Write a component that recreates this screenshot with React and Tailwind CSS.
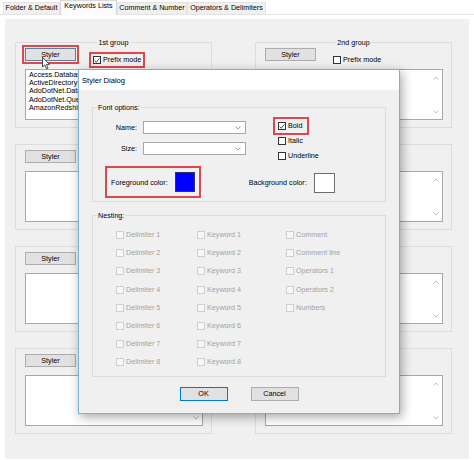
import { Fragment } from "react"

const FONT = { fontFamily: '"Liberation Sans", Arial, sans-serif' }

// only the two top labels show, the rest sit under the dialog
const GROUPS = ["1st group", "2nd group", "", "", "", "", "", ""]

const KEYWORDS = ["Access.Databas", "ActiveDirectory", "AdoDotNet.Data", "AdoDotNet.Que", "AmazonRedshif"]

const NESTING = [
  ["Delimiter 1", "Delimiter 2", "Delimiter 3", "Delimiter 4", "Delimiter 5", "Delimiter 6", "Delimiter 7", "Delimiter 8"],
  ["Keyword 1", "Keyword 2", "Keyword 3", "Keyword 4", "Keyword 5", "Keyword 6", "Keyword 7", "Keyword 8"],
  ["Comment", "Comment line", "Operators 1", "Operators 2", "Numbers"],
]

function Check({ checked, disabled, label, className = "" }) {
  return (
    <div className={`flex w-fit items-center gap-[2px] ${className}`}>
      <span
        className={`flex h-[8px] w-[8px] shrink-0 items-center justify-center border ${
          disabled ? "border-[#cfcfcf] bg-[#f7f7f7]" : "border-[#333333] bg-white"
        }`}
      >
        {checked ? (
          <svg width="7" height="7" viewBox="0 0 7 7">
            <polyline points="0.8,3.6 2.6,5.6 6.3,1" fill="none" stroke="#222" strokeWidth="0.9" />
          </svg>
        ) : null}
      </span>
      <span className={`leading-[8px] whitespace-nowrap ${disabled ? "text-[#a3a3a3]" : "text-black"}`}>{label}</span>
    </div>
  )
}

function Arrow({ up }) {
  return (
    <svg width="6" height="4" viewBox="0 0 6 4">
      <polyline
        points={up ? "0.5,3.5 3,1 5.5,3.5" : "0.5,0.5 3,3 5.5,0.5"}
        fill="none"
        stroke="#b5b5b5"
        strokeWidth="0.8"
      />
    </svg>
  )
}

function Group({ label, index }) {
  const first = index === 0
  // lower rows: the dialog hides the right styler buttons and the left prefix checkboxes
  const covered = index >= 2
  const right = index % 2 === 1
  return (
    <div className="relative flex h-[86px] flex-col border border-[#dcdcdc] pl-[9px] pt-[5px]">
      {label ? (
        <span className="absolute left-1/2 top-[-5px] -translate-x-1/2 bg-[#f0f0f0] px-[2px] leading-[9px] whitespace-nowrap">
          {label}
        </span>
      ) : null}
      <div className="flex h-[20px] items-start">
        {covered && right ? (
          <div className="h-[13px] w-[51px]" />
        ) : (
          <button
            className={`h-[13px] w-[51px] border bg-[#e1e1e1] leading-[11px] ${
              first
                ? "border-[#5f7f9f] outline-2 outline-offset-[1px] outline-[#e0474c]"
                : "border-[#adadad]"
            }`}
          >
            Styler
          </button>
        )}
        {covered ? null : (
          <div
            className={`ml-[17px] mt-[8px] ${
              first ? "outline-2 outline-offset-[2px] outline-[#e0474c]" : ""
            }`}
          >
            <Check checked={first} label="Prefix mode" />
          </div>
        )}
      </div>
      <div className="relative mt-[1px] h-[51px] w-[178px] overflow-hidden border border-[#a8a8a8] bg-white pl-[3px] pt-[1px]">
        {first
          ? KEYWORDS.map((k) => (
              <div key={k} className="h-[8.2px] leading-[8.2px] whitespace-nowrap">
                {k}
              </div>
            ))
          : null}
        <div className="absolute right-[3px] top-[6px]">
          <Arrow up />
        </div>
        <div className="absolute bottom-[5px] right-[3px]">
          <Arrow />
        </div>
      </div>
    </div>
  )
}

function Combo() {
  return (
    <div className="flex h-[13px] w-[103px] items-center justify-end border border-[#a8a8a8] bg-white pr-[4px]">
      <svg width="6" height="4" viewBox="0 0 6 4">
        <polyline points="0.5,0.5 3,3 5.5,0.5" fill="none" stroke="#8a8a8a" strokeWidth="0.8" />
      </svg>
    </div>
  )
}

function Cursor() {
  return (
    <svg className="absolute left-[42px] top-[57px]" width="9" height="13" viewBox="0 0 9 13">
      <path
        d="M0.5 0.5 L0.5 10 L2.8 7.9 L4.5 11.8 L6 11.1 L4.4 7.4 L7.6 7.4 Z"
        fill="#fff"
        stroke="#222"
        strokeWidth="0.8"
        strokeLinejoin="round"
      />
    </svg>
  )
}

function StylerDialog() {
  return (
    <div className="absolute left-[78px] top-[69px] flex h-[345px] w-[322px] flex-col border border-[#7fb0d3] bg-[#f0f0f0] shadow-[2px_3px_10px_rgba(0,0,0,0.35)]">
      <div className="flex h-[20px] items-center bg-white pl-[3px] text-[7.6px] leading-[9px]">Styler Dialog</div>

      <div className="flex flex-col px-[13px] pt-[17px]">
        {/* Font options */}
        <div className="relative h-[95px] border border-[#dcdcdc] pt-[13px]">
          <span className="absolute left-[4px] top-[-5px] bg-[#f0f0f0] px-[1px] leading-[9px]">Font options:</span>
          <div className="flex">
            <div className="flex w-[154px] flex-col gap-[8px]">
              <div className="flex items-center gap-[6px]">
                <span className="w-[44px] text-right leading-[9px]">Name:</span>
                <Combo />
              </div>
              <div className="flex items-center gap-[6px]">
                <span className="w-[44px] text-right leading-[9px]">Size:</span>
                <Combo />
              </div>
            </div>
            <div className="ml-[31px] flex flex-col pt-[1px]">
              <div className="h-[15px]">
                <Check checked label="Bold" className="pr-[2px] outline-2 outline-offset-[3px] outline-[#e0474c]" />
              </div>
              <div className="h-[15px]">
                <Check label="Italic" />
              </div>
              <div className="h-[15px]">
                <Check label="Underline" />
              </div>
            </div>
          </div>
          <div className="mt-[4px] flex h-[22px] items-center pl-[18px]">
            <div className="flex items-center gap-[7px] outline-2 outline-offset-[4px] outline-[#e0474c]">
              <span className="leading-[9px]">Foreground color:</span>
              <span className="h-[20px] w-[20px] border border-[#30306a] bg-[#0000ff]" />
            </div>
            <div className="ml-[54px] flex items-center gap-[7px]">
              <span className="leading-[9px]">Background color:</span>
              <span className="mt-[2px] h-[20px] w-[21px] border border-[#6d6d6d] bg-white" />
            </div>
          </div>
        </div>

        {/* Nesting */}
        <div className="relative mt-[13px] h-[162px] border border-[#dcdcdc] pl-[23px] pt-[10px]">
          <span className="absolute left-[4px] top-[-5px] bg-[#f0f0f0] px-[1px] leading-[9px]">Nesting:</span>
          <div className="grid grid-cols-[81px_89px_auto]">
            {NESTING.map((col, i) => (
              <div key={i} className="flex flex-col">
                {col.map((item) => (
                  <div key={item} className="flex h-[18.2px] items-center">
                    <Check disabled label={item} />
                  </div>
                ))}
              </div>
            ))}
          </div>
        </div>

        <div className="mt-[10px] flex justify-center gap-[23px]">
          <button className="h-[14px] w-[48px] border border-[#0078d7] bg-[#e1e1e1] leading-[12px]">OK</button>
          <button className="h-[14px] w-[48px] border border-[#adadad] bg-[#e1e1e1] leading-[12px]">Cancel</button>
        </div>
      </div>
    </div>
  )
}

export default function App() {
  const tabs = [
    { label: "Folder & Default", w: "w-[57px]" },
    { label: "Keywords Lists", w: "w-[57px]", active: true },
    { label: "Comment & Number", w: "w-[70px]" },
    { label: "Operators & Delimiters", w: "w-[79px]" },
  ]
  return (
    <div className="relative h-[460px] w-[474px] overflow-hidden bg-white text-[7.2px] text-black" style={FONT}>
      <div className="flex h-[14px] items-end pl-[3px]">
        {tabs.map((t) => (
          <div
            key={t.label}
            className={`flex items-center justify-center whitespace-nowrap border border-b-0 ${t.w} ${
              t.active
                ? "relative z-10 -mb-px h-[15px] border-[#d9d9d9] bg-[#fbfbfb] pb-[3px]"
                : "h-[12px] border-[#e3e3e3] bg-[#f0f0f0]"
            }`}
          >
            {t.label}
          </div>
        ))}
      </div>

      <div className="border-t border-[#e3e3e3] px-[5px] pt-[4px]">
        <div className="h-[440px] bg-[#f0f0f0] pl-[10px] pt-[23px]">
          <div className="grid grid-cols-[197px_197px] gap-x-[43px] gap-y-[16px]">
            {GROUPS.map((g, i) => (
              <Fragment key={i}>
                <Group label={g} index={i} />
              </Fragment>
            ))}
          </div>
        </div>
      </div>

      <Cursor />
      <StylerDialog />
    </div>
  )
}
